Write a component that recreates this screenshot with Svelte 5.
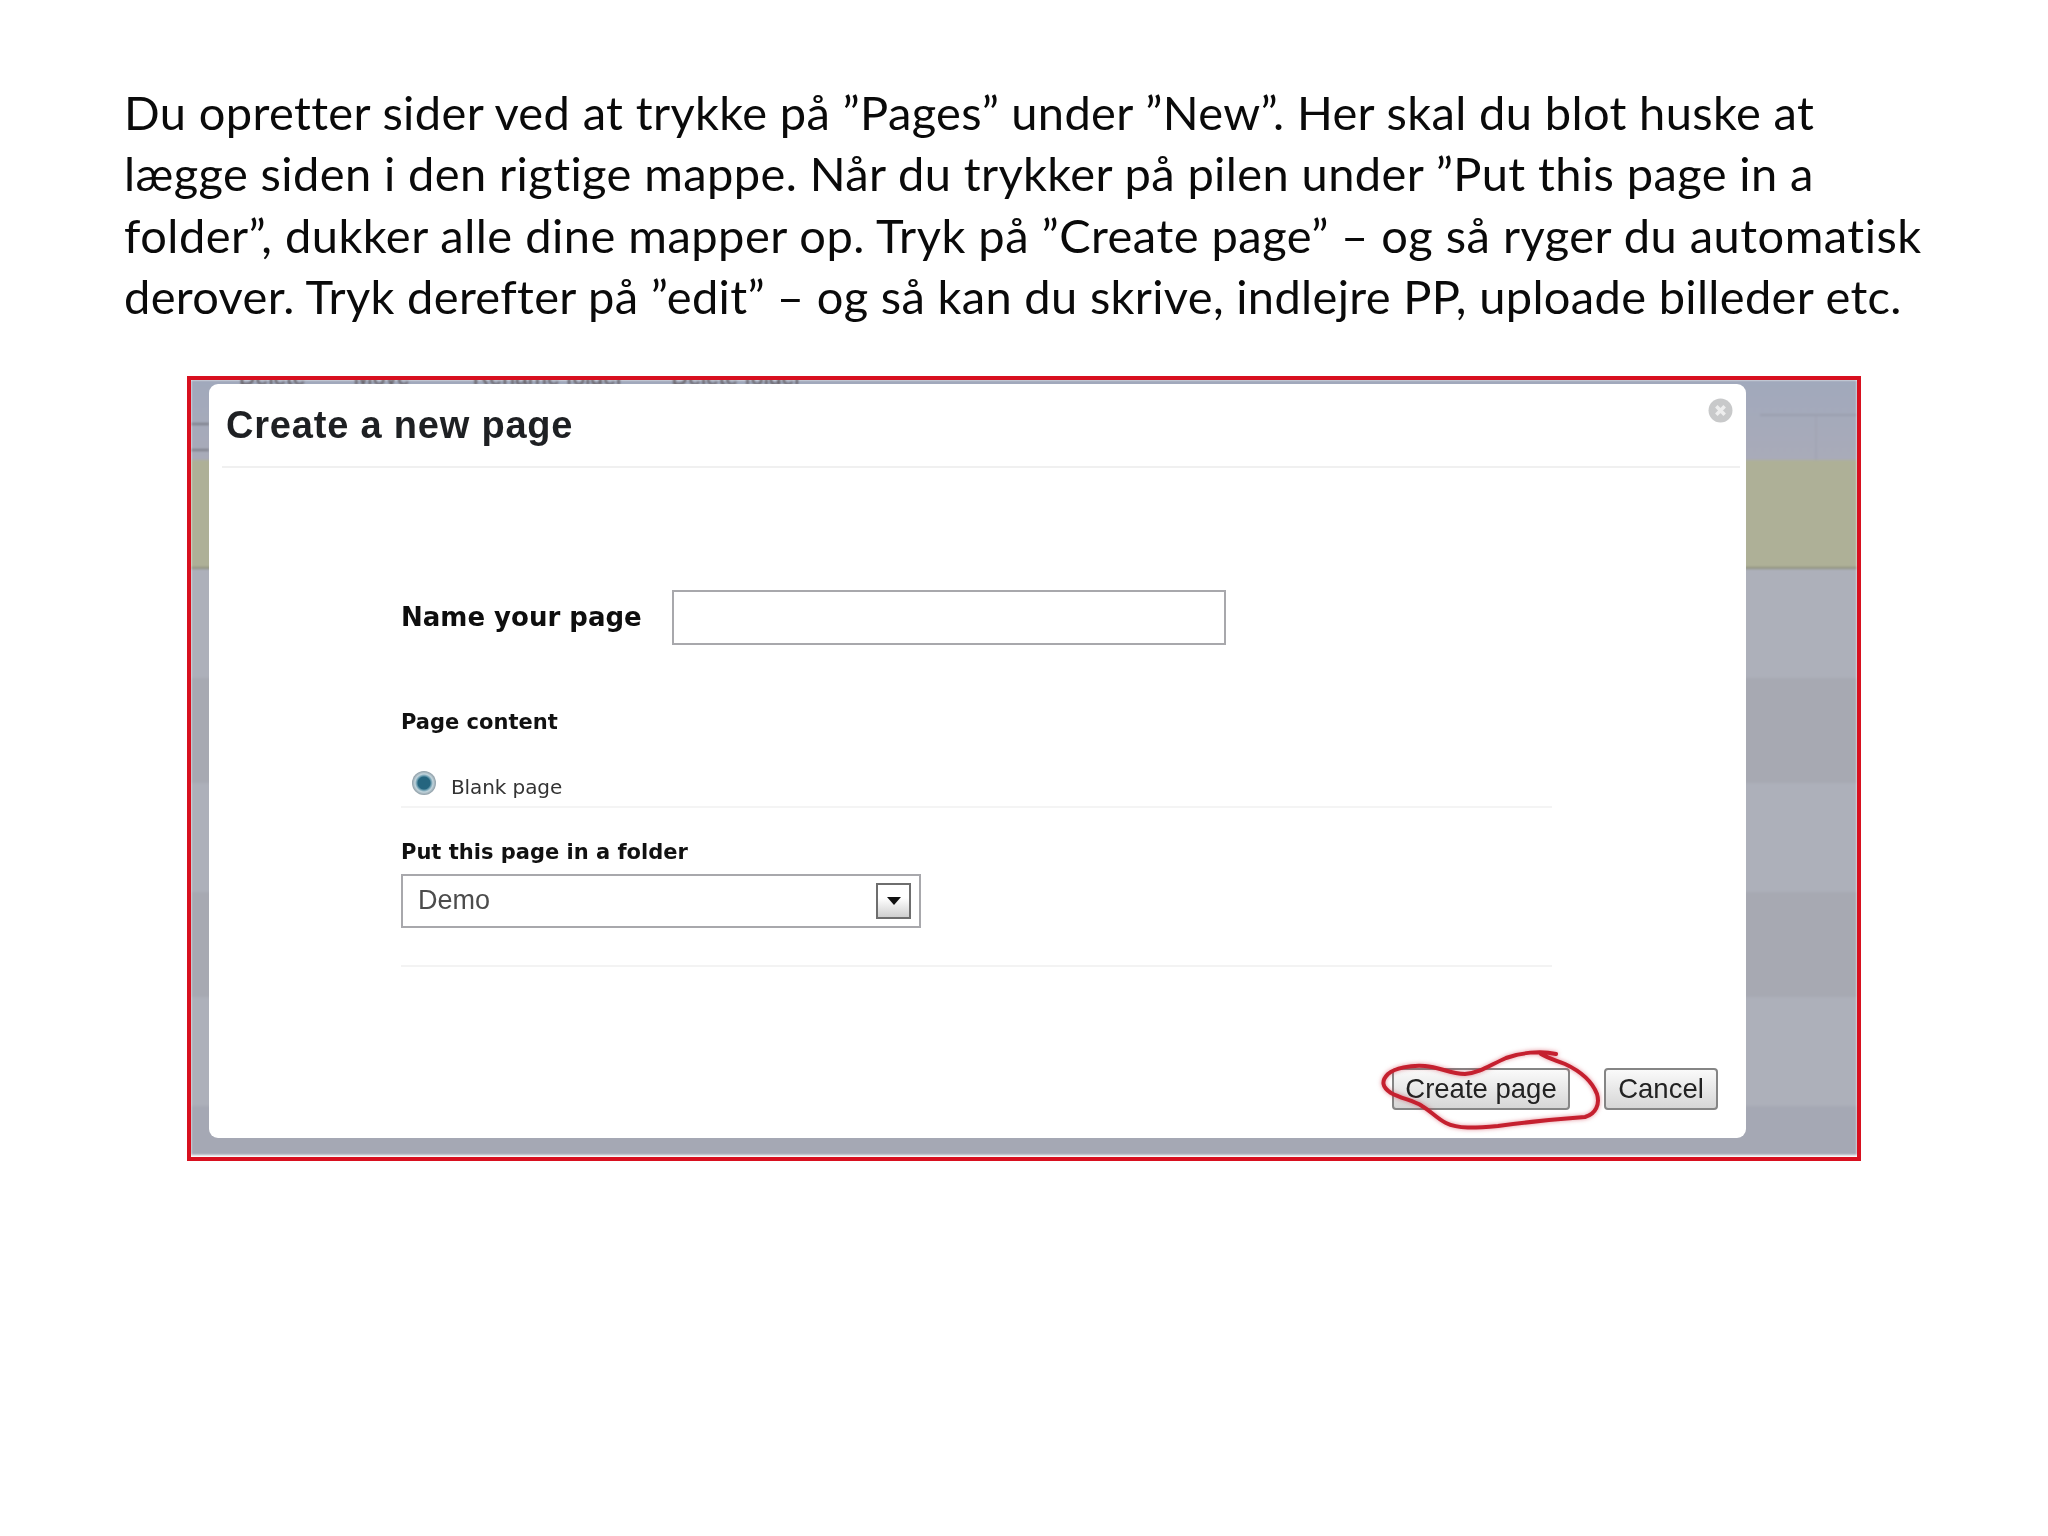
<script>
	const bands = ['head', 'olive', 'light', 'dark', 'light', 'dark', 'light', 'foot'];
</script>

<main>
	<p class="intro">
		<span>Du opretter sider ved at trykke på ”Pages” under ”New”. Her skal du blot huske at</span>
		<span>lægge siden i den rigtige mappe. Når du trykker på pilen under ”Put this page in a</span>
		<span>folder”, dukker alle dine mapper op. Tryk på ”Create page” – og så ryger du automatisk</span>
		<span>derover. Tryk derefter på ”edit” – og så kan du skrive, indlejre PP, uploade billeder etc.</span>
	</p>

	<div class="shot">
		<div class="backdrop">
			{#each bands as band}
				<div class="band {band}"></div>
			{/each}
		</div>

		<div class="ghost">
			<span>Delete</span>
			<span>Move</span>
			<span class="rename">Rename folder</span>
			<span>Delete folder</span>
		</div>

		<div class="dialog">
			<div class="dialogHead">
				<h2>Create a new page</h2>
				<svg class="close" viewBox="0 0 24 24">
					<circle cx="12" cy="12" r="11.5" fill="#c8c9ca" />
					<path d="M8 8l8 8M16 8l-8 8" stroke="#eee" stroke-width="3.4" />
				</svg>
			</div>

			<div class="form">
				<div class="nameRow">
					<span class="nameLabel">Name your page</span>
					<div class="input"></div>
				</div>

				<div class="label content">Page content</div>
				<div class="radioRow">
					<span class="radio"></span>
					<span>Blank page</span>
				</div>

				<div class="label folder">Put this page in a folder</div>
				<div class="select">
					<span>Demo</span>
					<span class="arrow"><i></i></span>
				</div>
				<div class="rule"></div>
			</div>

			<div class="actions">
				<div class="btn create">Create page</div>
				<div class="btn cancel">Cancel</div>
			</div>
		</div>

		<!-- hand drawn loop round the button, page coordinates -->
		<svg class="mark" viewBox="191 379 1666 777">
			<path
				d="M1556 1053 C1540 1049 1520 1052 1506 1057 C1490 1064 1480 1072 1465 1073 C1450 1073 1440 1066 1425 1065 C1410 1064 1395 1067 1388 1073 C1381 1080 1382 1086 1391 1092 C1402 1098 1413 1099 1422 1105 C1432 1111 1436 1117 1446 1122 C1458 1128 1475 1127 1498 1125 C1520 1122 1545 1119 1585 1116 C1596 1113 1600 1103 1597 1093 C1592 1080 1580 1070 1565 1063 C1555 1059 1548 1057 1541 1053"
				fill="none"
				stroke="#c5202f"
				stroke-width="4"
				stroke-linecap="round"
			/>
		</svg>
	</div>
</main>

<style>
	:global(body) {
		background: #fff;
	}

	main {
		width: 2048px;
		height: 1536px;
		padding: 82px 0 0 124px;
		box-sizing: border-box;
	}

	.intro {
		margin: 0;
		font-family: Lato, 'Liberation Sans', sans-serif;
		font-size: 47px;
		line-height: 61.4px;
		letter-spacing: 0.4px;
		font-variant-ligatures: none;
		color: #0a0a0a;
		filter: blur(0.35px);
	}

	.intro span {
		display: block;
		white-space: nowrap;
	}
	.intro span:nth-child(1) {
		letter-spacing: 0.37px;
	}
	.intro span:nth-child(3) {
		letter-spacing: 0.49px;
	}
	.intro span:nth-child(4) {
		letter-spacing: 0.33px;
	}

	.shot {
		position: relative;
		width: 1674px;
		height: 785px;
		margin: 48px 0 0 63px;
		box-sizing: border-box;
		border: 4px solid #d8101f;
		overflow: hidden;
	}

	.backdrop {
		display: flex;
		flex-direction: column;
		height: 100%;
		filter: blur(0.8px);
	}

	.band {
		flex: none;
	}
	.head {
		height: 80px;
		background:
			linear-gradient(#7a7c86, #7a7c86) no-repeat 0 43px / 18px 2px,
			linear-gradient(#7a7c86, #7a7c86) no-repeat 0 69px / 18px 2px,
			linear-gradient(#9a9eae, #9a9eae) no-repeat 1569px 34px / 97px 2px,
			linear-gradient(#a2a5b4, #a2a5b4) no-repeat 1624px 34px / 2px 46px,
			linear-gradient(#a1a9bc, #a9abb9);
	}
	.olive {
		height: 109px;
		background: #aeb097;
		border-bottom: 2px solid #8f917f;
		box-sizing: border-box;
	}
	.light {
		height: 109px;
		background: #adb0ba;
	}
	.dark {
		height: 105px;
		background: #a7a9b2;
	}
	.foot {
		height: 49px;
		background: #a5a8b4;
	}

	.ghost {
		position: absolute;
		top: -14px;
		left: 48px;
		display: flex;
		gap: 48px;
		font-family: 'Liberation Sans', sans-serif;
		font-size: 23px;
		line-height: 22px;
		color: #5e565a;
		filter: blur(0.8px);
	}

	.rename {
		margin-left: 15px;
	}

	.dialog {
		position: absolute;
		top: 4px;
		left: 18px;
		width: 1537px;
		height: 754px;
		display: flex;
		flex-direction: column;
		background: #fff;
		border-radius: 9px;
		filter: blur(0.7px);
	}

	.dialogHead {
		position: relative;
		height: 82px;
		margin-left: 13px;
		margin-right: 6px;
		border-bottom: 2px solid #f0f0f0;
	}

	h2 {
		margin: 0;
		padding: 18px 0 0 4px;
		font-family: 'Liberation Sans', sans-serif;
		font-size: 38px;
		line-height: 46px;
		font-weight: 700;
		letter-spacing: 0.8px;
		color: #1e2023;
	}

	.close {
		position: absolute;
		top: 14px;
		right: 7px;
		width: 25px;
		height: 25px;
	}

	.form {
		margin: 122px 194px 0 192px;
		display: flex;
		flex-direction: column;
		font-family: 'DejaVu Sans', sans-serif;
	}

	.nameRow {
		display: flex;
		align-items: center;
		height: 55px;
	}

	.nameLabel {
		width: 271px;
		font-size: 26px;
		font-weight: 700;
		color: #0e0e0e;
	}

	.input {
		width: 554px;
		height: 55px;
		box-sizing: border-box;
		border: 2px solid #a8a8ac;
		background: #fff;
	}

	.label {
		font-size: 21px;
		line-height: 28px;
		font-weight: 700;
		color: #111;
	}

	.content {
		margin-top: 63px;
	}

	.radioRow {
		display: flex;
		align-items: center;
		gap: 15px;
		height: 37px;
		margin-top: 11px;
		padding-top: 22px;
		padding-left: 11px;
		border-bottom: 2px solid #f4f4f4;
		font-size: 20px;
		letter-spacing: -0.1px;
		color: #333;
	}

	.radio {
		width: 24px;
		height: 24px;
		margin-top: -8px;
		border-radius: 50%;
		background: radial-gradient(circle, #25657f 0 6px, #5d93a8 7px, #c3d5dd 9px, #8d9ca5 12px);
	}

	.folder {
		margin-top: 30px;
	}

	.select {
		display: flex;
		align-items: center;
		justify-content: space-between;
		width: 520px;
		height: 54px;
		margin-top: 8px;
		box-sizing: border-box;
		padding: 0 8px 0 15px;
		border: 2px solid #a8a8ac;
		font-family: 'Liberation Sans', sans-serif;
		font-size: 27px;
		color: #4c4c4c;
	}

	.arrow {
		display: flex;
		align-items: center;
		justify-content: center;
		width: 35px;
		height: 36px;
		box-sizing: border-box;
		border: 2px solid #6e6e6e;
		background: linear-gradient(#fff, #fff 40%, #cfcfcf);
	}

	.arrow i {
		border-style: solid;
		border-width: 8px 7px 0;
		border-color: #111 transparent transparent;
	}

	.rule {
		height: 2px;
		margin-top: 37px;
		background: #f3f3f3;
	}

	.actions {
		display: flex;
		justify-content: flex-end;
		gap: 34px;
		margin-top: auto;
		padding: 0 28px 28px 0;
		font-family: 'Liberation Sans', sans-serif;
	}

	.btn {
		display: flex;
		align-items: center;
		justify-content: center;
		height: 42px;
		box-sizing: border-box;
		border: 2px solid #858585;
		border-radius: 4px;
		background: linear-gradient(#fafafa, #d6d6d6);
		font-size: 27.5px;
		color: #222;
	}

	.create {
		width: 178px;
	}

	.cancel {
		width: 114px;
	}

	.mark {
		position: absolute;
		inset: 0;
		width: 100%;
		height: 100%;
		filter: blur(0.5px) drop-shadow(0 0 2px rgba(200, 30, 50, 0.5));
	}
</style>
